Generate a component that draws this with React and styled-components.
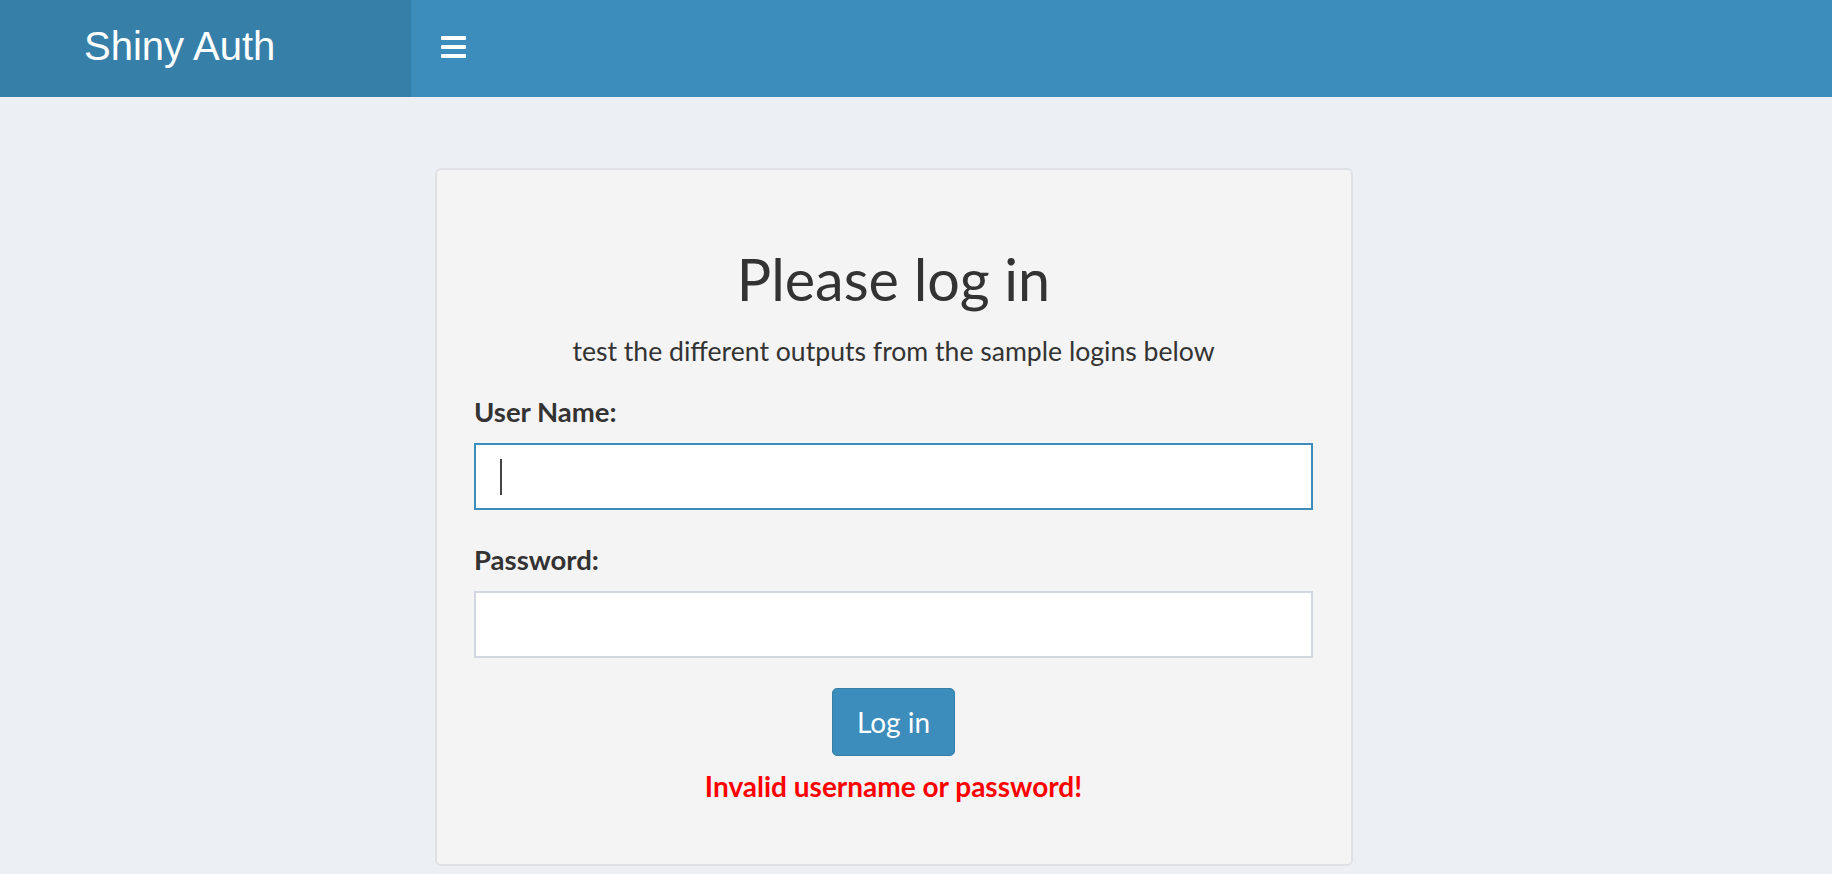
import React from "react";
import styled, { createGlobalStyle } from "styled-components";

const GlobalStyle = createGlobalStyle`
  html, body {
    margin: 0;
    padding: 0;
    background: #ecf0f5;
  }
  body {
    font-family: "Lato", "Source Sans Pro", "Noto Sans", sans-serif;
    color: #333;
  }
`;

const Page = styled.div`
  min-height: 100vh;
  background: #ecf0f5;
`;

const Header = styled.header`
  display: flex;
  height: 97px;
  background: #3c8dbc;
`;

const Logo = styled.div`
  width: 411px;
  flex-shrink: 0;
  box-sizing: border-box;
  padding-left: 84px;
  background: #367fa9;
  color: #fff;
  font-family: "Liberation Sans", Arial, sans-serif;
  font-size: 40px;
  line-height: 93px;
`;

const Navbar = styled.nav`
  display: flex;
  align-items: center;
  padding-left: 30px;
`;

const Burger = styled.button`
  display: flex;
  flex-direction: column;
  gap: 5px;
  width: 25px;
  margin: 0 0 3px;
  padding: 0;
  border: none;
  background: none;
  cursor: pointer;
`;

const BurgerBar = styled.span`
  display: block;
  height: 4px;
  border-radius: 1px;
  background: #fff;
`;

const Content = styled.main`
  padding: 71px 0 0 435px;
`;

const Card = styled.section`
  width: 918px;
  box-sizing: border-box;
  padding: 76px 38px 58px 37px;
  background: #f4f4f4;
  border: 2px solid #dfe1e4;
  border-radius: 6px;
  display: flex;
  flex-direction: column;
`;

const Title = styled.h1`
  margin: 0;
  font-size: 57.5px;
  font-weight: 400;
  line-height: 66px;
  text-align: center;
  color: #333;
`;

const Subtitle = styled.p`
  margin: 19px 0 21px;
  font-size: 26.6px;
  line-height: 40px;
  text-align: center;
  color: #333;
`;

const Field = styled.div`
  display: flex;
  flex-direction: column;
  gap: 11px;
  margin-bottom: ${(p) => p.$gapAfter}px;
`;

const Label = styled.label`
  font-size: 27.5px;
  font-weight: 700;
  line-height: 40px;
  color: #333;
`;

const InputWrap = styled.div`
  position: relative;
`;

const TextInput = styled.input`
  display: block;
  width: 100%;
  height: 67px;
  box-sizing: border-box;
  padding: 0 24px;
  font-family: inherit;
  font-size: 28px;
  background: #fff;
  border: 2px solid ${(p) => (p.$focused ? "#3c8dbc" : "#d2d6de")};
  border-radius: 0;
  outline: none;
  caret-color: transparent;
`;

const Caret = styled.span`
  position: absolute;
  left: 26px;
  top: 16px;
  width: 2px;
  height: 36px;
  background: #444;
`;

const Actions = styled.div`
  display: flex;
  flex-direction: column;
  align-items: center;
  gap: 10px;
`;

const LoginButton = styled.button`
  height: 68px;
  padding: 0 24px;
  font-family: inherit;
  font-size: 28px;
  color: #fff;
  background: #3c8dbc;
  border: 1px solid #367fa9;
  border-radius: 5px;
  cursor: pointer;
`;

const ErrorText = styled.div`
  font-size: 28px;
  font-weight: 700;
  line-height: 40px;
  color: #ff0000;
`;

function App() {
  return (
    <Page>
      <GlobalStyle />
      <Header>
        <Logo>Shiny Auth</Logo>
        <Navbar>
          <Burger aria-label="Toggle navigation">
            <BurgerBar />
            <BurgerBar />
            <BurgerBar />
          </Burger>
        </Navbar>
      </Header>

      <Content>
        <Card>
          <Title>Please log in</Title>
          <Subtitle>test the different outputs from the sample logins below</Subtitle>

          <Field $gapAfter={30}>
            <Label htmlFor="user">User Name:</Label>
            <InputWrap>
              <TextInput id="user" type="text" $focused />
              <Caret />
            </InputWrap>
          </Field>

          <Field $gapAfter={30}>
            <Label htmlFor="pass">Password:</Label>
            <InputWrap>
              <TextInput id="pass" type="password" />
            </InputWrap>
          </Field>

          <Actions>
            <LoginButton>Log in</LoginButton>
            <ErrorText>Invalid username or password!</ErrorText>
          </Actions>
        </Card>
      </Content>
    </Page>
  );
}

export default App;
